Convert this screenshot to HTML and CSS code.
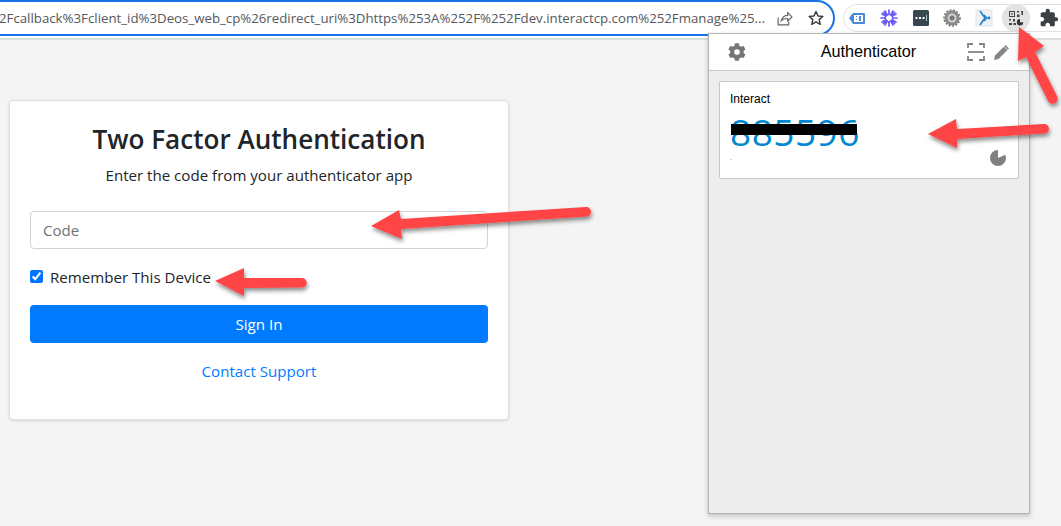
FILE: index.html
```html
<!DOCTYPE html>
<html lang="en">
<head>
<meta charset="utf-8">
<title>Two Factor Authentication</title>
<link rel="stylesheet" href="styles.css">
</head>
<body>
<header class="toolbar">
  <div class="omnibox">
    <div class="url-wrap"><span class="url">2Fcallback%3Fclient_id%3Deos_web_cp%26redirect_uri%3Dhttps%253A%252F%252Fdev.interactcp.com%252Fmanage%25...</span></div>
    <svg class="omni-icon" viewBox="0 0 16 16" width="17" height="17"><path d="M2 7v7h10v-3M5 10c1-3.500 3.500-5 6-5V2.500L15 6.500l-4 4V8c-2.500 0-4.500.5-6 2z" fill="none" stroke="#5f6368" stroke-width="1.100"/></svg>
    <svg class="omni-icon" viewBox="0 0 16 16" width="16" height="16"><path d="M8 1.500l2 4.400 4.800.5-3.600 3.200 1 4.700L8 11.900l-4.200 2.400 1-4.700L1.200 6.400 6 5.900z" fill="none" stroke="#3c4043" stroke-width="1.500" stroke-linejoin="round"/></svg>
  </div>
  <div class="extensions">
    <svg class="ext" viewBox="0 0 18 18" width="18" height="18"><path d="M1 9l4-5h11a1 1 0 0 1 1 1v9a1 1 0 0 1-1 1H5z" fill="#4a89dc"/><rect x="6" y="6" width="9" height="7" fill="#fff"/><path d="M8 7h1v1H8zm0 3h1v1H8zm3-3h2v5h-2z" fill="#4a89dc"/></svg>
    <svg class="ext" viewBox="0 0 18 18" width="18" height="18"><g stroke="#6a5cf5" stroke-width="1.700" stroke-linecap="round"><path d="M9 1v4.500M9 12.500V17M1 9h4.500M12.500 9H17M3.300 3.300l3.200 3.200M11.500 11.500l3.200 3.200M14.700 3.300l-3.200 3.200M6.500 11.500l-3.200 3.200M5 2l2.200 4M10.800 12l2.200 4M13 2l-2.200 4M7.200 12L5 16M2 5l4 2.200M12 10.800l4 2.200M16 5l-4 2.200M6 10.800L2 13"/></g><circle cx="9" cy="9" r="3.700" fill="none" stroke="#6a5cf5" stroke-width="1.200"/></svg>
    <svg class="ext" viewBox="0 0 18 18" width="18" height="18"><rect x="1" y="1" width="16" height="16" rx="1.500" fill="#37474f"/><path d="M3.500 8h2v2h-2zm3.500 0h2v2H7zm3.500 0h2v2h-2z" fill="#fff"/><path d="M14.500 6v6" stroke="#b0bec5"/></svg>
    <svg class="ext" viewBox="0 0 18 18" width="18" height="18"><circle cx="9" cy="9" r="7.500" fill="#8a8a8a"/><circle cx="9" cy="9" r="8" fill="none" stroke="#777" stroke-width="1.500" stroke-dasharray="2 1.500"/><circle cx="9" cy="9" r="4.500" fill="#cfcfcf"/><circle cx="9" cy="9" r="2.500" fill="#777"/></svg>
    <svg class="ext" viewBox="0 0 18 18" width="18" height="18"><rect x="1" y="1" width="16" height="16" fill="#eef2f5" stroke="#dfe3e8"/><path d="M5 2l5 7-5 7" fill="none" stroke="#1c7fc4" stroke-width="1.600"/><path d="M9 6l3 3-3 3" fill="none" stroke="#1c7fc4" stroke-width="1.300"/><circle cx="14" cy="9" r="1.400" fill="#1c7fc4"/></svg>
    <span class="ext-active">
      <svg viewBox="0 0 16 16" width="16" height="16"><path d="M1 1h6v6H1zM2 2v4h4V2zM3.200 3.200h1.600v1.600H3.200z" fill="#444" fill-rule="evenodd"/><path d="M9 1h2v1.500H9zM13 1h2v4h-1.500V2.500H13zM9 4.500h2.500V7H9z" fill="#444"/><path d="M1 9h2v1.500H1zM5 9h2v2.500H5zM1 13h3v2H1zM5.500 13H8v2H5.500z" fill="#444"/><path d="M12 9a3.200 3.200 0 1 0 3.200 3.200H12z" fill="#333"/></svg>
    </span>
    <svg class="ext" viewBox="0 0 24 24" width="20" height="20"><path d="M20.500 11H19V7c0-1.100-.9-2-2-2h-4V3.500C13 2.120 11.880 1 10.500 1S8 2.120 8 3.500V5H4c-1.100 0-1.990.9-1.990 2v3.800H3.500c1.490 0 2.700 1.210 2.700 2.700s-1.210 2.700-2.700 2.700H2V20c0 1.100.9 2 2 2h3.800v-1.500c0-1.490 1.210-2.700 2.700-2.700 1.490 0 2.700 1.210 2.700 2.700V22H17c1.100 0 2-.9 2-2v-4h1.500c1.380 0 2.500-1.120 2.500-2.500S21.880 11 20.500 11z" fill="#3c4043"/></svg>
  </div>
</header>

<main class="page">
  <section class="login-card">
    <h1 class="login-title">Two Factor Authentication</h1>
    <p class="login-sub">Enter the code from your authenticator app</p>
    <input class="code-input" type="text" placeholder="Code">
    <label class="remember"><input class="remember-box" type="checkbox" checked>Remember This Device</label>
    <button class="signin" type="button">Sign In</button>
    <a class="support" href="#">Contact Support</a>
  </section>
</main>

<aside class="popup">
  <div class="popup-head">
    <svg class="gear" viewBox="0 0 512 512" width="18" height="18"><path fill="#757575" d="M487 316l-43-25a195 195 0 0 0 0-70l43-25c5-3 7-9 5-14-11-36-30-68-55-95a12 12 0 0 0-15-2l-43 25a190 190 0 0 0-61-35V25a12 12 0 0 0-9-12c-37-8-75-8-111 0a12 12 0 0 0-9 12v50a196 196 0 0 0-61 35L85 85a12 12 0 0 0-15 2C45 114 26 146 15 182c-2 5 0 11 5 14l43 25a195 195 0 0 0 0 70l-43 25c-5 3-7 9-5 14 11 36 30 68 55 95a12 12 0 0 0 15 2l43-25a190 190 0 0 0 61 35v50a12 12 0 0 0 9 12c37 8 75 8 111 0a12 12 0 0 0 9-12v-50a196 196 0 0 0 61-35l43 25a12 12 0 0 0 15-2c25-27 44-59 55-95 2-5 0-11-5-14zM256 336a80 80 0 1 1 0-160 80 80 0 0 1 0 160z"/></svg>
    <span class="popup-title">Authenticator</span>
    <svg class="scan" viewBox="0 0 18 18" width="18" height="18"><path d="M1 5V1h5M12 1h5v4M1 13v4h5M12 17h5v-4" fill="none" stroke="#858585" stroke-width="1.800"/><path d="M1 9h16" stroke="#858585" stroke-width="1.800"/></svg>
    <svg class="pencil" viewBox="0 0 18 18" width="18" height="18"><path d="M1 17l1-4.500L12.500 2l3.500 3.500L5.500 16z" fill="#858585"/><path d="M11 3.500l3.500 3.500" stroke="#fff" stroke-width=".8"/></svg>
  </div>
  <div class="popup-body">
    <div class="otp-card">
      <div class="otp-issuer">Interact</div>
      <div class="otp-code"><span class="otp-digits">885596</span><span class="otp-redact"></span></div>
      <div class="otp-foot"><span class="otp-dot">.</span>
        <svg class="otp-pie" viewBox="0 0 16 16" width="16" height="16"><path d="M8 0a8 8 0 1 0 8 8l-.7-3.200L8 8z" fill="#808080"/></svg>
      </div>
    </div>
  </div>
</aside>

<svg class="annotations" viewBox="0 0 1061 526" width="1061" height="526">
  <defs><filter id="arrow-shadow" x="-20%" y="-50%" width="140%" height="200%"><feDropShadow dx="1" dy="3" stdDeviation="2" flood-color="#000" flood-opacity=".45"/></filter></defs>
  <g fill="#ff4444" filter="url(#arrow-shadow)">
    <path d="M371 226L399 210 401 219 586 207a4.500 4.500 0 0 1 .5 9.500L401 229 402 239z"/>
    <path d="M215 281L244 268 244 278 302 278a4.500 4.500 0 0 1 0 9.500L244 288 244 296z"/>
    <path d="M928 134L956 119 957 129 1044 124a4.500 4.500 0 0 1 .5 9.500L957 139 957 148z"/>
    <path d="M1019 27L1044 46 1035 52 1057 96a5 5 0 0 1-9 5L1026 57 1018 61z"/>
  </g>
</svg>
</body>
</html>
```
FILE: styles.css
```css
* { box-sizing: border-box; }
html, body { margin: 0; height: 100%; }
body {
  width: 1061px;
  height: 526px;
  overflow: hidden;
  background: #f4f4f4;
  font-family: "Open Sans", "Noto Sans", sans-serif;
  position: relative;
}

.toolbar {
  height: 40px;
  display: flex;
  align-items: flex-start;
  background: #fff;
  border-bottom: 2px solid #dcdcdc;
}
.omnibox {
  width: 855px;
  margin-left: -20px;
  height: 36px;
  border: 2px solid #1a73e8;
  border-radius: 18px;
  display: flex;
  align-items: center;
  padding-right: 9px;
  gap: 15px;
  flex: none;
}
.url-wrap {
  flex: 1;
  overflow: hidden;
  display: flex;
  justify-content: flex-end;
  min-width: 0;
  margin-right: -4px;
}
.url {
  white-space: nowrap;
  font-family: "Open Sans", sans-serif;
  font-size: 13.250px;
  color: #55585c;
}
.omni-icon { flex: none; }

.extensions {
  margin: 4px -16px 0 8px;
  height: 28px;
  border: 1px solid #dfe1e5;
  border-radius: 14px;
  flex: 1;
  display: flex;
  align-items: center;
  padding-left: 4px;
  gap: 13.800px;
}
.ext { flex: none; }
.ext-active {
  flex: none;
  width: 28px;
  height: 28px;
  margin: 0 -5px;
  border-radius: 50%;
  background: #e3e3e3;
  display: flex;
  align-items: center;
  justify-content: center;
}

.page { padding: 60px 0 0 9px; }
.login-card {
  width: 500px;
  height: 320px;
  background: #fff;
  border: 1px solid #dfdfdf;
  border-radius: 4px;
  box-shadow: 0 1px 3px rgba(0,0,0,.12);
  padding: 20px 20px 0;
  display: flex;
  flex-direction: column;
}
.login-title {
  margin: 0;
  font-size: 26.100px;
  line-height: 36px;
  font-weight: 600;
  color: #212529;
  text-align: center;
}
.login-sub {
  margin: 7px 0 0;
  font-size: 15.100px;
  line-height: 22px;
  color: #212529;
  text-align: center;
}
.code-input {
  margin-top: 25px;
  height: 38px;
  width: 100%;
  border: 1px solid #ced4da;
  border-radius: 4px;
  padding: 0 12px;
  font: 15.100px "Open Sans", sans-serif;
  color: #495057;
  background: #fff;
}
.code-input::placeholder { color: #6c757d; opacity: 1; }
.remember {
  margin-top: 16px;
  height: 24px;
  display: flex;
  align-items: center;
  font-size: 15.100px;
  color: #212529;
}
.remember-box {
  width: 13px;
  height: 13px;
  margin: 0 7px 2px 0;
  accent-color: #0075ff;
}
.signin {
  margin-top: 16px;
  height: 38px;
  border: 0;
  border-radius: 4px;
  background: #007bff;
  color: #fff;
  font: 15.100px "Open Sans", sans-serif;
  padding: 0 0 1px;
}
.support {
  margin-top: 17px;
  text-align: center;
  font-size: 15.100px;
  line-height: 22px;
  color: #007bff;
  text-decoration: none;
}

.popup {
  position: absolute;
  left: 708px;
  top: 33px;
  width: 322px;
  height: 481px;
  background: #ededed;
  border: 1px solid #b4b4b4;
  box-shadow: 0 2px 5px rgba(0,0,0,.22);
  display: flex;
  flex-direction: column;
  font-family: "Liberation Sans", Arial, sans-serif;
}
.popup-head {
  height: 37px;
  flex: none;
  background: #fff;
  border-bottom: 1px solid #c8c8c8;
  display: flex;
  align-items: center;
  padding: 0 18px 0 19px;
}
.gear { flex: none; }
.popup-title {
  flex: 1;
  text-align: center;
  font-size: 16.200px;
  color: #000;
  padding-left: 39px;
  padding-right: 15px;
  padding-bottom: 2px;
}
.scan { flex: none; margin-right: 8px; }
.pencil { flex: none; }
.popup-body { padding: 10px; flex: 1; }
.otp-card {
  height: 98px;
  background: #fff;
  border: 1px solid #c8c8c8;
  border-radius: 2px;
  padding: 10px 10px 0;
}
.otp-issuer { font-size: 12px; line-height: 14px; color: #000; }
.otp-code {
  position: relative;
  width: max-content;
  margin-top: 8px;
  height: 36px;
}
.otp-digits { font: 37px/36px "Open Sans", sans-serif; color: #0288d1; letter-spacing: .5px; }
.otp-redact {
  position: absolute;
  left: 1px;
  right: 3px;
  top: 10px;
  height: 11px;
  background: #000;
}
.otp-foot {
  display: flex;
  justify-content: space-between;
  align-items: center;
  height: 16px;
  padding-right: 2px;
}
.otp-dot { font-size: 8px; line-height: 12px; color: #9a8a00; }

.annotations {
  position: absolute;
  left: 0;
  top: 0;
  pointer-events: none;
}
```
